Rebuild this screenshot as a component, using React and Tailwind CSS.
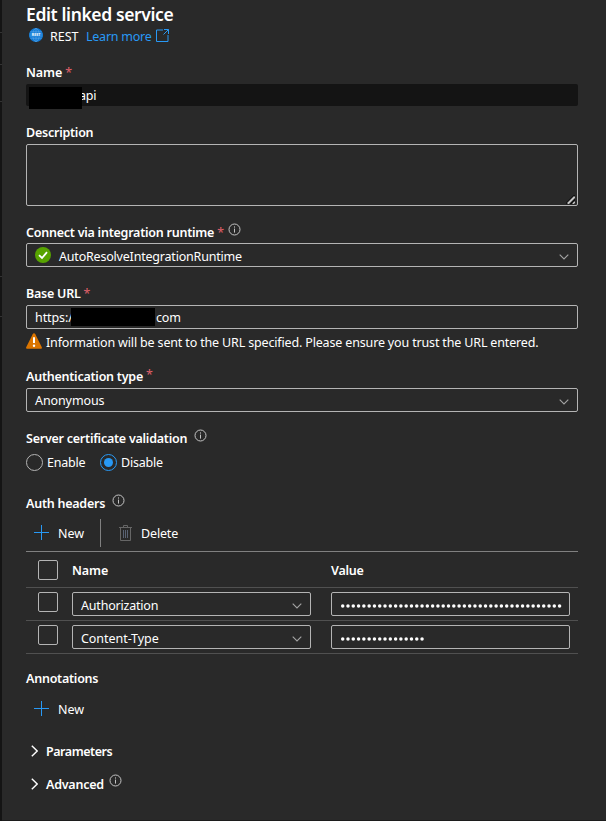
import React from "react";

function Info({ className = "" }) {
  return (
    <svg className={"h-[13px] w-[13px] shrink-0 " + className} viewBox="0 0 13 13" fill="none" stroke="#c4c4c4">
      <circle cx="6.5" cy="6.5" r="5.5" />
      <path d="M6.5 5.6v4M6.5 3.4v1.2" />
    </svg>
  );
}

function Chevron() {
  return (
    <svg className="mt-[4px] h-[6px] w-[10px] shrink-0" viewBox="0 0 10 6" fill="none" stroke="#a4a4a4" strokeWidth="1.1">
      <path d="M0.7 0.7L5 5L9.3 0.7" />
    </svg>
  );
}

function Label({ children, className = "", star = "", info = "" }) {
  return (
    <div className="flex h-[20px] items-center text-[12.5px] font-semibold leading-[18px]">
      <span className={className || "tracking-[-0.24px]"}>{children}</span>
      {star && <span className={"ml-[3px] w-[6px] font-normal text-[#e0606a] " + star}>*</span>}
      {info && <Info className={info} />}
    </div>
  );
}

function Plus() {
  return (
    <svg className="h-[16px] w-[15px] shrink-0" viewBox="0 0 15 16" fill="#2899f5" shapeRendering="crispEdges">
      <rect x="7" y="0" width="1" height="15" />
      <rect x="0" y="7" width="15" height="1" />
    </svg>
  );
}

function Checkbox({ className = "" }) {
  return <span className={"h-[20px] w-[20px] shrink-0 rounded-[2px] border border-[#b4b4b4] " + className} />;
}

function HeaderRow({ name, nameClass, value }) {
  return (
    <div className="flex h-[33px] border-b border-[#505050] pl-[12px] pt-[4px]">
      <Checkbox />
      <div className="ml-[14px] flex h-[24px] w-[239px] items-center justify-between rounded-[2px] border border-[#b4b4b4] pl-[8px] pr-[8px]">
        <span className={"pt-[3px] " + nameClass}>{name}</span>
        <Chevron />
      </div>
      <div className="ml-[20px] flex h-[24px] w-[239px] items-center rounded-[2px] border border-[#b4b4b4] pl-[8px]">
        <svg className="mt-[3px] h-[4px] w-[224px]" viewBox="0 0 224 4" fill="#ffffff">
          {Array.from({ length: value }, (_, i) => (
            <circle key={i} cx={2.7 + i * 5.29} cy="2" r="1.75" />
          ))}
        </svg>
      </div>
    </div>
  );
}

function Expander({ children }) {
  return (
    <div className="flex h-[18px] items-center text-[12.5px] font-semibold">
      <svg className="ml-[5px] mr-[8px] h-[12px] w-[7px] shrink-0" viewBox="0 0 7 12" fill="none" stroke="#ffffff" strokeWidth="1.4">
        <path d="M0.8 0.7L6.2 6L0.8 11.3" />
      </svg>
      {children}
    </div>
  );
}

export default function App() {
  return (
    <div className="flex h-[821px] w-[610px] overflow-hidden whitespace-nowrap bg-white font-['Noto_Sans',sans-serif] text-[12.5px] leading-[18px] text-white">
      <div className="w-[2px] shrink-0 bg-[#141414] pt-[32px]">
        <div className="h-[32px] border-t border-[#333333]" />
        <div className="h-[37px] border-t border-[#333333]" />
        <div className="h-[175px] border-t border-[#333333]" />
        <div className="h-[40px] border-t border-[#333333]" />
        <div className="border-t border-[#333333]" />
      </div>
      <div className="flex w-[604px] shrink-0 flex-col border-b border-[#1c1c1c] bg-[#292929] pl-[24px] pr-[28px]">
        <div className="flex h-[27px] items-center text-[17.5px] font-semibold">
          <span className="tracking-[-0.37px]">Edit linked service</span>
        </div>
        <div className="flex h-[18px] items-center">
          <svg className="ml-[3px] mt-[-3px] h-[14px] w-[14px] shrink-0" viewBox="0 0 14 14">
            <circle cx="7" cy="7" r="7" fill="#0f78d4" />
            <g fill="none" stroke="#5ea9e8" strokeWidth="0.6">
              <ellipse cx="7" cy="7" rx="3.2" ry="6.6" />
              <path d="M1.3 3.8h11.4M1.3 10.2h11.4M7 0.5v13" />
            </g>
            <rect x="0.5" y="5" width="13" height="4" fill="#2588dc" />
            <text x="7" y="8.3" textAnchor="middle" fontSize="3.6" fontWeight="700" fill="#ffffff">REST</text>
          </svg>
          <span className="ml-[7px] w-[28px] pt-[2px]">REST</span>
          <span className="ml-[8px] w-[67px] pt-[2px] tracking-[-0.24px] text-[#2899f5]">Learn more</span>
          <svg className="ml-[3px] mt-[-2px] h-[13px] w-[13px] shrink-0" viewBox="0 0 13 13" fill="none" stroke="#2899f5">
            <path d="M7 1H0.5v11.5h11.5V6M8 0.5h4.5v4.5M12.5 0.5L7.5 5.5" />
          </svg>
        </div>

        <div className="mt-[18px]"><Label className="tracking-[-0.1px]" star="mt-[-1px]">Name</Label></div>
        <div className="mt-px flex h-[22px] items-center rounded-[2px] bg-[#141414] pl-[3px]">
          <span className="z-10 mt-[5px] h-[22px] w-[53px] bg-black" />
          <span className="-ml-[3px] pt-px tracking-[-0.24px]">api</span>
        </div>

        <div className="mt-[17px]"><Label>Description</Label></div>
        <div className="mt-px flex h-[62px] items-end justify-end rounded-[2px] border border-[#b4b4b4] pb-px pr-[2px]">
          <svg className="h-[9px] w-[9px]" viewBox="0 0 9 9" fill="none">
            <path d="M0 9V7.5L7.5 0H9V9Z" fill="#111111" />
            <path d="M1.8 8.8L8.8 1.8" stroke="#c4c4c4" strokeWidth="2" />
            <path d="M6.8 9L9 6.8" stroke="#c4c4c4" strokeWidth="1.6" />
          </svg>
        </div>

        <div className="mt-[17px]"><Label star="mt-[-1px]" info="ml-[5px] mt-[-7px]">Connect via integration runtime</Label></div>
        <div className="flex h-[24px] items-center rounded-[2px] border border-[#b4b4b4] pl-[8px] pr-[8px]">
          <svg className="h-[16px] w-[16px] shrink-0" viewBox="0 0 16 16">
            <circle cx="8" cy="8" r="8" fill="#57a300" />
            <path d="M4 8.2L7 11L12 5.2" fill="none" stroke="#ffffff" strokeWidth="1.8" />
          </svg>
          <span className="ml-[8px] flex-1 pt-[3px] tracking-[-0.2px]">AutoResolveIntegrationRuntime</span>
          <Chevron />
        </div>

        <div className="mt-[17px]"><Label star="mt-[-1px]">Base URL</Label></div>
        <div className="mt-px flex h-[24px] items-center rounded-[2px] border border-[#b4b4b4] pl-[8px]">
          <span className="w-[36px] pt-[2px] tracking-[-0.1px]">https:/</span>
          <span className="z-10 mb-px h-[18px] w-[84px] bg-black" />
          <span className="ml-px pt-[2px] tracking-[-0.2px]">com</span>
        </div>
        <div className="mt-[4px] flex h-[18px] items-center">
          <svg className="mt-[-2px] h-[16px] w-[16px] shrink-0" viewBox="0 0 16 16">
            <path d="M8 0.3Q8.8 0.3 9.3 1.2L15.8 14.2Q16.3 15.8 15 15.8H1Q-0.3 15.8 0.2 14.2L6.7 1.2Q7.2 0.3 8 0.3Z" fill="#db7500" />
            <path d="M8 4.2V10" stroke="#ffffff" strokeWidth="2" />
            <circle cx="8" cy="12.7" r="1.2" fill="#ffffff" />
          </svg>
          <span className="ml-[4px] pt-[2px] tracking-[-0.157px]">Information will be sent to the URL specified. Please ensure you trust the URL entered.</span>
        </div>

        <div className="mt-[16px]"><Label star="mt-[-5px]">Authentication type</Label></div>
        <div className="mt-px flex h-[24px] items-center justify-between rounded-[2px] border border-[#b4b4b4] pl-[8px] pr-[8px]">
          <span className="pt-[2px] tracking-[-0.1px]">Anonymous</span>
          <Chevron />
        </div>

        <div className="mt-[17px]"><Label info="ml-[7px] mt-[-7px]">Server certificate validation</Label></div>
        <div className="mt-[4px] flex h-[18px] items-center">
          <span className="h-[17px] w-[17px] rounded-full border border-[#b4b4b4]" />
          <span className="ml-[4px] w-[53px] pt-[2px] tracking-[-0.2px]">Enable</span>
          <span className="flex h-[17px] w-[17px] items-center justify-center rounded-full border border-[#2899f5]">
            <span className="h-[9px] w-[9px] rounded-full bg-[#2899f5]" />
          </span>
          <span className="ml-[4px] pt-[2px] tracking-[-0.2px]">Disable</span>
        </div>

        <div className="mt-[23px]"><Label info="ml-[7px] mt-[-7px]">Auth headers</Label></div>
        <div className="mt-[5px] flex h-[28px] items-center pl-[8px]">
          <Plus />
          <span className="ml-[9px] w-[42px] pt-[2px]">New</span>
          <span className="h-[28px] w-px bg-[#808080]" />
          <svg className="ml-[18px] h-[16px] w-[13px] shrink-0" viewBox="0 0 13 16" fill="none" stroke="#666666">
            <path d="M0 2.5h13M4.5 2.5v-2h4v2M1.5 2.5v13h10v-13" />
            <path d="M4.5 5v8M6.5 5v8M8.5 5v8" stroke="#596273" />
          </svg>
          <span className="ml-[9px] pt-[2px] tracking-[-0.15px]">Delete</span>
        </div>

        <div className="mt-[4px] flex h-[37px] items-center border-b border-t border-b-[#505050] border-t-[#808080] pl-[12px] font-semibold">
          <Checkbox className="mt-px" />
          <span className="ml-[14px] w-[259px] pt-[2px] tracking-[-0.1px]">Name</span>
          <span className="pt-[2px] tracking-[-0.24px]">Value</span>
        </div>
        <HeaderRow name="Authorization" nameClass="tracking-[-0.2px]" value={42} />
        <HeaderRow name="Content-Type" nameClass="tracking-[-0.05px]" value={16} />

        <div className="mt-[15px]"><Label>Annotations</Label></div>
        <div className="mt-[11px] flex h-[18px] items-center pl-[8px]">
          <Plus />
          <span className="ml-[9px] pt-[2px]">New</span>
        </div>
        <div className="mt-[24px]"><Expander><span className="pt-[2px] tracking-[-0.45px]">Parameters</span></Expander></div>
        <div className="mt-[15px]"><Expander><span className="pt-[2px] tracking-[-0.24px]">Advanced</span><Info className="ml-[5px] mt-[-7px]" /></Expander></div>
      </div>
    </div>
  );
}
